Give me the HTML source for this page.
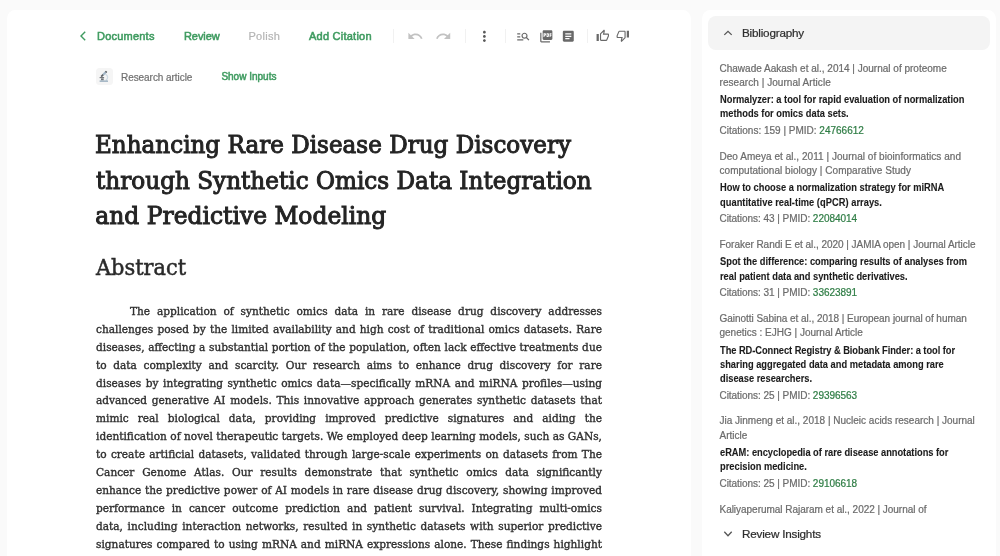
<!DOCTYPE html>
<html lang="en">
<head>
<meta charset="utf-8">
<title>Enhancing Rare Disease Drug Discovery</title>
<style>
*{box-sizing:border-box;margin:0;padding:0}
html,body{width:1000px;height:556px;overflow:hidden;background:#fafafa;font-family:"Liberation Sans",sans-serif}
#root{position:absolute;left:0;top:0;width:1000px;height:556px;overflow:hidden;will-change:transform}
#main{position:absolute;left:6.5px;top:10.2px;width:684.3px;height:560px;background:#fff;border-radius:8.5px 8.5px 0 0}
#side{position:absolute;left:701.8px;top:10.2px;width:293.9px;height:560px;background:#fff;border-radius:8.5px 8.5px 0 0}
.tb{position:absolute;top:29px;height:14px;line-height:14px;font-size:11px;color:#3f9b60;white-space:nowrap;-webkit-text-stroke:0.55px #3f9b60}
.tb.dis{color:#b4b4b4;-webkit-text-stroke:0.2px #b4b4b4}
.vd{position:absolute;top:29px;width:1px;height:14px;background:#f1f1f1}
.ico{position:absolute}
.serif{font-family:"DejaVu Serif","Liberation Serif",serif}
.h1{position:absolute;left:95.3px;white-space:nowrap;font-size:23.4px;color:#242424;height:36px;line-height:36px;transform-origin:0 50%;-webkit-text-stroke:1px #242424}
.h2{position:absolute;left:96px;top:252px;white-space:nowrap;font-size:21.5px;color:#2a2a2a;height:32px;line-height:32px;transform-origin:0 50%;transform:scaleX(0.972);-webkit-text-stroke:0.5px #2a2a2a}
.pl{position:absolute;left:95.5px;width:564.7px;height:18px;line-height:18px;font-size:11.8px;color:#303030;text-align:justify;text-align-last:justify;white-space:nowrap;transform-origin:0 0;transform:scaleX(0.896);-webkit-text-stroke:0.4px #303030}
.sl{position:absolute;left:719.5px;height:14px;line-height:14px;font-size:10px;white-space:nowrap}
.meta{color:#6c6c6c;-webkit-text-stroke-width:0.22px}
.ttl{color:#1c1c1c;font-weight:bold;font-size:10px;transform-origin:0 50%;transform:scaleX(0.93);-webkit-text-stroke-width:0.1px}
.pm{color:#2f7d45}
#bibh{position:absolute;left:708px;top:16px;width:282px;height:34px;background:#f4f4f4;border-radius:8px}
.sh{position:absolute;left:742px;height:16px;line-height:16px;font-size:11.7px;letter-spacing:-0.2px;color:#2e2e2e;white-space:nowrap;-webkit-text-stroke-width:0.22px}
#rvh{position:absolute;left:703px;top:519px;width:292px;height:40px;background:#fff}
</style>
</head>
<body>
<div id="root">
<div id="main"></div>
<div id="side"></div>

<!-- toolbar -->
<svg class="ico" style="left:79px;top:29.7px" width="8" height="12" viewBox="0 0 8 12"><path d="M6.2 1.8 L2 6 L6.2 10.2" fill="none" stroke="#3f9b60" stroke-width="1.4"/></svg>
<div class="tb" id="t1" style="left:97px;letter-spacing:0.22px">Documents</div>
<div class="tb" id="t2" style="left:184px;letter-spacing:-0.08px">Review</div>
<div class="tb dis" id="t3" style="left:248.5px;letter-spacing:0.27px">Polish</div>
<div class="tb" id="t4" style="left:309px;letter-spacing:0.24px">Add Citation</div>
<div class="vd" style="left:393px"></div>
<div class="vd" style="left:465px"></div>
<div class="vd" style="left:505px"></div>
<div class="vd" style="left:587px"></div>

<svg class="ico" style="left:406.6px;top:28px" width="16.6" height="16.6" viewBox="0 0 24 24"><path fill="#c2c2c2" d="M12.5 8c-2.65 0-5.05.99-6.9 2.6L2 7v9h9l-3.62-3.62c1.39-1.16 3.16-1.88 5.12-1.88 3.54 0 6.55 2.31 7.6 5.5l2.37-.78C21.08 11.03 17.15 8 12.5 8z"/></svg>
<svg class="ico" style="left:435.4px;top:28px" width="16.6" height="16.6" viewBox="0 0 24 24"><path fill="#c2c2c2" d="M18.4 10.6C16.55 8.99 14.15 8 11.5 8c-4.65 0-8.58 3.03-9.96 7.22L3.9 16c1.05-3.19 4.05-5.5 7.6-5.5 1.95 0 3.730.72 5.12 1.88L13 16h9V7l-3.6 3.6z"/></svg>
<svg class="ico" style="left:476.3px;top:27.7px" width="16.8" height="16.8" viewBox="0 0 24 24"><path fill="#5a5a5a" d="M12 8c1.1 0 2-.9 2-2s-.9-2-2-2-2 .9-2 2 .9 2 2 2zm0 2c-1.1 0-2 .9-2 2s.9 2 2 2 2-.9 2-2-.9-2-2-2zm0 6c-1.1 0-2 .9-2 2s.9 2 2 2 2-.9 2-2-.9-2-2-2z"/></svg>
<svg class="ico" style="left:515.7px;top:29px" width="14.6" height="14.6" viewBox="0 0 24 24"><path fill="#696969" d="M7 9H2V7h5v2zm0 3H2v2h5v-2zm13.59 7l-3.83-3.83c-.8.52-1.74.83-2.76.83-2.76 0-5-2.24-5-5s2.240-5 5-5 5 2.240 5 5c0 1.020-.31 1.960-.83 2.750L22 17.590 20.590 19zM17 11c0-1.650-1.350-3-3-3s-3 1.350-3 3 1.350 3 3 3 3-1.350 3-3zM2 19h10v-2H2v2z"/></svg>
<svg class="ico" style="left:538.8px;top:28.8px" width="14.6" height="14.6" viewBox="0 0 24 24"><path fill="#696969" d="M20 2H8c-1.1 0-2 .9-2 2v12c0 1.1.9 2 2 2h12c1.1 0 2-.9 2-2V4c0-1.1-.9-2-2-2zm-8.5 7.5c0 .83-.67 1.5-1.500 1.500H9v2H7.500V7H10c.83 0 1.500.67 1.500 1.500v1zm5 2c0 .83-.67 1.500-1.500 1.500h-2.500V7H15c.83 0 1.500.67 1.500 1.500v3zm4-3H19v1h1.500V11H19v2h-1.500V7h3v1.500zM9 9.500h1v-1H9v1zM4 6H2v14c0 1.1.9 2 2 2h14v-2H4V6zm10 5.500h1v-3h-1v3z"/></svg>
<svg class="ico" style="left:561.2px;top:28.8px" width="14.6" height="14.6" viewBox="0 0 24 24"><path fill="#696969" d="M19 3H5c-1.1 0-2 .9-2 2v14c0 1.1.9 2 2 2h14c1.1 0 2-.9 2-2V5c0-1.1-.9-2-2-2zm-5 14H7v-2h7v2zm3-4H7v-2h10v2zm0-4H7V7h10v2z"/></svg>
<svg class="ico" style="left:596.2px;top:29.3px" width="13.6" height="13.6" viewBox="0 0 24 24"><path fill="#696969" d="M9 21h9c.83 0 1.54-.5 1.840-1.220l3.020-7.050c.09-.23.14-.47.14-.73v-2c0-1.1-.9-2-2-2h-6.310l.95-4.570.03-.32c0-.41-.17-.79-.44-1.060L14.170 1 7.580 7.590C7.220 7.950 7 8.450 7 9v10c0 1.1.9 2 2 2zM9 9l4.340-4.340L12 10h9v2l-3 7H9V9zM1 9h4v12H1z"/></svg>
<svg class="ico" style="left:615.9px;top:28.9px" width="13.6" height="13.6" viewBox="0 0 24 24"><path fill="#696969" d="M15 3H6c-.83 0-1.540.5-1.840 1.220l-3.020 7.050c-.09.23-.14.47-.14.73v2c0 1.1.9 2 2 2h6.310l-.95 4.570-.03.32c0 .41.17.79.44 1.060L9.830 23l6.590-6.590c.36-.36.58-.86.58-1.410V5c0-1.1-.9-2-2-2zm0 12l-4.340 4.340L12 14H3v-2l3-7h9v10zm4-12h4v12h-4z"/></svg>

<!-- doc type row -->
<div style="position:absolute;left:95.6px;top:68.2px;width:17.2px;height:17.2px;border-radius:3.5px;background:#f5f5f5"></div>
<svg class="ico" style="left:99px;top:70.4px" width="10" height="12" viewBox="0 0 10 12">
<path d="M6.4 4.2 C9.2 5.4 9.4 8.6 6.9 10.4" fill="none" stroke="#cfdbe5" stroke-width="1.3"/>
<path d="M5.82 1.52 L7.38 3.08 L4.98 5.48 L3.42 3.92 Z" fill="#a3b7c7"/>
<path d="M6.96 0.66 L8.24 1.94 L7.24 2.94 L5.96 1.66 Z" fill="#4b5056"/>
<path d="M3.56 4.06 L4.84 5.34 L2.84 7.34 L1.56 6.06 Z" fill="#5b6066"/>
<rect x="0.6" y="7.3" width="4.5" height="0.8" fill="#43474c"/>
<rect x="2" y="8.4" width="2.7" height="1.9" fill="#70757b"/>
<rect x="0.6" y="10.4" width="8.4" height="1.3" rx="0.3" fill="#8ea5b8"/>
</svg>
<div id="ra" style="position:absolute;left:121px;top:71px;height:14px;line-height:14px;font-size:10px;letter-spacing:-0.06px;color:#707070;white-space:nowrap;-webkit-text-stroke-width:0.2px">Research article</div>
<div id="si" style="position:absolute;left:221.4px;top:70px;height:14px;line-height:14px;font-size:10px;color:#3f9b60;white-space:nowrap;-webkit-text-stroke:0.5px #3f9b60">Show Inputs</div>

<!-- document -->
<div class="h1 serif" id="h1a" style="top:127px;transform:scaleX(0.9867)">Enhancing Rare Disease Drug Discovery</div>
<div class="h1 serif" id="h1b" style="top:162.5px;left:96px;transform:scaleX(0.9897)">through Synthetic Omics Data Integration</div>
<div class="h1 serif" id="h1c" style="top:198px;transform:scaleX(1.0)">and Predictive Modeling</div>
<div class="h2 serif" id="h2">Abstract</div>
<div class="pl serif" style="top:302.0px;left:129.8px;width:526.8px">The application of synthetic omics data in rare disease drug discovery addresses</div>
<div class="pl serif" style="top:320.0px">challenges posed by the limited availability and high cost of traditional omics datasets. Rare</div>
<div class="pl serif" style="top:338.0px">diseases, affecting a substantial portion of the population, often lack effective treatments due</div>
<div class="pl serif" style="top:356.0px">to data complexity and scarcity. Our research aims to enhance drug discovery for rare</div>
<div class="pl serif" style="top:374.0px">diseases by integrating synthetic omics data—specifically mRNA and miRNA profiles—using</div>
<div class="pl serif" style="top:391.0px">advanced generative AI models. This innovative approach generates synthetic datasets that</div>
<div class="pl serif" style="top:409.0px">mimic real biological data, providing improved predictive signatures and aiding the</div>
<div class="pl serif" style="top:427.0px">identification of novel therapeutic targets. We employed deep learning models, such as GANs,</div>
<div class="pl serif" style="top:445.0px">to create artificial datasets, validated through large-scale experiments on datasets from The</div>
<div class="pl serif" style="top:463.0px">Cancer Genome Atlas. Our results demonstrate that synthetic omics data significantly</div>
<div class="pl serif" style="top:481.0px">enhance the predictive power of AI models in rare disease drug discovery, showing improved</div>
<div class="pl serif" style="top:499.0px">performance in cancer outcome prediction and patient survival. Integrating multi-omics</div>
<div class="pl serif" style="top:517.0px">data, including interaction networks, resulted in synthetic datasets with superior predictive</div>
<div class="pl serif" style="top:535.0px">signatures compared to using mRNA and miRNA expressions alone. These findings highlight</div>

<!-- side panel -->
<div id="bibh"></div>
<svg class="ico" style="left:723px;top:29px" width="10" height="8" viewBox="0 0 10 8"><path d="M1.3 5.9 L5 2.3 L8.7 5.9" fill="none" stroke="#555" stroke-width="1.3"/></svg>
<div class="sh" id="bib" style="top:25px">Bibliography</div>
<div class="sl meta" style="top:62px">Chawade Aakash et al., 2014 | Journal of proteome</div>
<div class="sl meta" style="top:76px;letter-spacing:0.054px">research | Journal Article</div>
<div class="sl ttl" style="top:93px">Normalyzer: a tool for rapid evaluation of normalization</div>
<div class="sl ttl" style="top:107px">methods for omics data sets.</div>
<div class="sl meta" style="top:124px">Citations: 159 | PMID: <span class="pm">24766612</span></div>
<div class="sl meta" style="top:150px;letter-spacing:0.043px">Deo Ameya et al., 2011 | Journal of bioinformatics and</div>
<div class="sl meta" style="top:164px;letter-spacing:0.037px">computational biology | Comparative Study</div>
<div class="sl ttl" style="top:181px">How to choose a normalization strategy for miRNA</div>
<div class="sl ttl" style="top:196px;letter-spacing:0.035px">quantitative real-time (qPCR) arrays.</div>
<div class="sl meta" style="top:212px;letter-spacing:-0.043px">Citations: 43 | PMID: <span class="pm">22084014</span></div>
<div class="sl meta" style="top:238px;letter-spacing:-0.037px">Foraker Randi E et al., 2020 | JAMIA open | Journal Article</div>
<div class="sl ttl" style="top:255px">Spot the difference: comparing results of analyses from</div>
<div class="sl ttl" style="top:270px">real patient data and synthetic derivatives.</div>
<div class="sl meta" style="top:286px;letter-spacing:-0.043px">Citations: 31 | PMID: <span class="pm">33623891</span></div>
<div class="sl meta" style="top:312px;letter-spacing:-0.039px">Gainotti Sabina et al., 2018 | European journal of human</div>
<div class="sl meta" style="top:326px">genetics : EJHG | Journal Article</div>
<div class="sl ttl" style="top:344px;letter-spacing:-0.056px">The RD-Connect Registry &amp; Biobank Finder: a tool for</div>
<div class="sl ttl" style="top:358px">sharing aggregated data and metadata among rare</div>
<div class="sl ttl" style="top:372px">disease researchers.</div>
<div class="sl meta" style="top:389px;letter-spacing:-0.043px">Citations: 25 | PMID: <span class="pm">29396563</span></div>
<div class="sl meta" style="top:414px">Jia Jinmeng et al., 2018 | Nucleic acids research | Journal</div>
<div class="sl meta" style="top:429px">Article</div>
<div class="sl ttl" style="top:446px;letter-spacing:-0.024px">eRAM: encyclopedia of rare disease annotations for</div>
<div class="sl ttl" style="top:460px">precision medicine.</div>
<div class="sl meta" style="top:477px;letter-spacing:-0.043px">Citations: 25 | PMID: <span class="pm">29106618</span></div>
<div class="sl meta" style="top:503px;letter-spacing:-0.028px">Kaliyaperumal Rajaram et al., 2022 | Journal of</div>
<div id="rvh"></div>
<svg class="ico" style="left:723px;top:530px" width="10" height="8" viewBox="0 0 10 8"><path d="M1.3 1.8 L5 5.7 L8.7 1.8" fill="none" stroke="#555" stroke-width="1.3"/></svg>
<div class="sh" id="rv" style="top:526px">Review Insights</div>
</div>
</body>
</html>
